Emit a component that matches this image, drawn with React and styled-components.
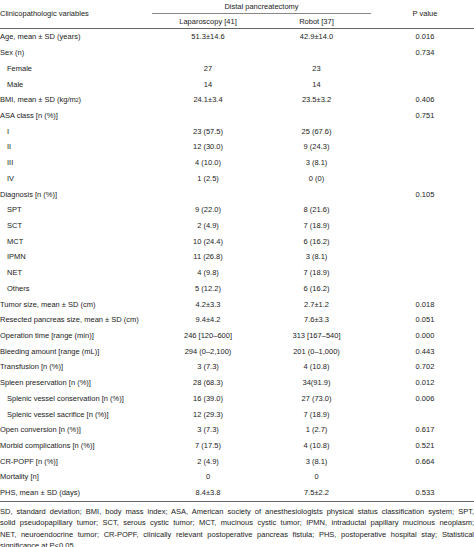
import React from "react";
import styled, { createGlobalStyle } from "styled-components";

const Global = createGlobalStyle`
  html, body { margin: 0; padding: 0; background: #fff; overflow: hidden; }
  body { font-family: "Liberation Sans", Arial, sans-serif; color: #222; }
`;

const Page = styled.div`
  width: 479px;
  display: flex;
  flex-direction: column;
`;

const Grid = styled.div`
  display: grid;
  grid-template-columns: 154px 108px 109px 108px;
  font-size: 7.5px;
`;

const HeadLabel = styled.div`
  grid-row: 1 / span 2;
  grid-column: ${(p) => p.$col};
  display: flex;
  align-items: center;
  justify-content: ${(p) => (p.$center ? "center" : "flex-start")};
  border-bottom: 1px solid #666;
  height: 29px;
  padding-bottom: 1px;
  box-sizing: border-box;
`;

const GroupHead = styled.div`
  grid-row: 1;
  grid-column: 2 / span 2;
  height: 14px;
  display: flex;
  align-items: center;
  justify-content: center;
  border-bottom: 1px solid #888;
  margin-left: -2px;
  box-sizing: border-box;
`;

const SubHead = styled.div`
  grid-row: 2;
  grid-column: ${(p) => p.$col};
  height: 15px;
  display: flex;
  align-items: center;
  justify-content: center;
  border-bottom: 1px solid #666;
  box-sizing: border-box;
  padding-top: 1px;
`;

const Cell = styled.div`
  height: 15.72px;
  display: flex;
  align-items: center;
  justify-content: ${(p) => (p.$left ? "flex-start" : "center")};
  padding-left: ${(p) => (p.$indent ? "7px" : "0")};
  white-space: nowrap;
  border-bottom: ${(p) => (p.$last ? "1px solid #666" : "none")};
`;

const Sup = styled.span`
  font-size: 5px;
  vertical-align: 3px;
  line-height: 0;
`;

const Notes = styled.div`
  width: 474px;
  padding-top: 4px;
  font-size: 7.5px;
  line-height: 11.5px;
`;

const NoteLine = styled.div`
  text-align: justify;
  text-align-last: ${(p) => (p.$last ? "left" : "justify")};
  white-space: nowrap;
`;

const rows = [
  ["Age, mean ± SD (years)", "51.3±14.6", "42.9±14.0", "0.016"],
  ["Sex (n)", "", "", "0.734"],
  ["Female", "27", "23", "", true],
  ["Male", "14", "14", "", true],
  [<>BMI, mean ± SD (kg/m<Sup>2</Sup>)</>, "24.1±3.4", "23.5±3.2", "0.406"],
  ["ASA class [n (%)]", "", "", "0.751"],
  ["I", "23 (57.5)", "25 (67.6)", "", true],
  ["II", "12 (30.0)", "9 (24.3)", "", true],
  ["III", "4 (10.0)", "3 (8.1)", "", true],
  ["IV", "1 (2.5)", "0 (0)", "", true],
  ["Diagnosis [n (%)]", "", "", "0.105"],
  ["SPT", "9 (22.0)", "8 (21.6)", "", true],
  ["SCT", "2 (4.9)", "7 (18.9)", "", true],
  ["MCT", "10 (24.4)", "6 (16.2)", "", true],
  ["IPMN", "11 (26.8)", "3 (8.1)", "", true],
  ["NET", "4 (9.8)", "7 (18.9)", "", true],
  ["Others", "5 (12.2)", "6 (16.2)", "", true],
  ["Tumor size, mean ± SD (cm)", "4.2±3.3", "2.7±1.2", "0.018"],
  ["Resected pancreas size, mean ± SD (cm)", "9.4±4.2", "7.6±3.3", "0.051"],
  ["Operation time [range (min)]", "246 [120–600]", "313 [167–540]", "0.000"],
  ["Bleeding amount [range (mL)]", "294 (0–2,100)", "201 (0–1,000)", "0.443"],
  ["Transfusion [n (%)]", "3 (7.3)", "4 (10.8)", "0.702"],
  ["Spleen preservation [n (%)]", "28 (68.3)", "34(91.9)", "0.012"],
  ["Splenic vessel conservation [n (%)]", "16 (39.0)", "27 (73.0)", "0.006", true],
  ["Splenic vessel sacrifice [n (%)]", "12 (29.3)", "7 (18.9)", "", true],
  ["Open conversion [n (%)]", "3 (7.3)", "1 (2.7)", "0.617"],
  ["Morbid complications [n (%)]", "7 (17.5)", "4 (10.8)", "0.521"],
  ["CR-POPF [n (%)]", "2 (4.9)", "3 (8.1)", "0.664"],
  ["Mortality [n]", "0", "0", ""],
  ["PHS, mean ± SD (days)", "8.4±3.8", "7.5±2.2", "0.533"],
];

const notes = [
  "SD, standard deviation; BMI, body mass index; ASA, American society of anesthesiologists physical status classification system; SPT,",
  "solid pseudopapillary tumor; SCT, serous cystic tumor; MCT, mucinous cystic tumor; IPMN, intraductal papillary mucinous neoplasm;",
  "NET, neuroendocrine tumor; CR-POPF, clinically relevant postoperative pancreas fistula; PHS, postoperative hospital stay; Statistical",
  "significance at P<0.05.",
];

export default function App() {
  return (
    <Page>
      <Global />
      <Grid>
        <HeadLabel $col={1}>Clinicopathologic variables</HeadLabel>
        <GroupHead>Distal pancreatectomy</GroupHead>
        <HeadLabel $col={4} $center>P value</HeadLabel>
        <SubHead $col={2}>Laparoscopy [41]</SubHead>
        <SubHead $col={3}>Robot [37]</SubHead>
        {rows.map((r, i) => {
          const last = i === rows.length - 1;
          return (
            <React.Fragment key={i}>
              <Cell $left $indent={r[4]} $last={last}>{r[0]}</Cell>
              <Cell $last={last}>{r[1]}</Cell>
              <Cell $last={last}>{r[2]}</Cell>
              <Cell $last={last}>{r[3]}</Cell>
            </React.Fragment>
          );
        })}
      </Grid>
      <Notes>
        {notes.map((n, i) => (
          <NoteLine key={i} $last={i === notes.length - 1}>{n}</NoteLine>
        ))}
      </Notes>
    </Page>
  );
}
